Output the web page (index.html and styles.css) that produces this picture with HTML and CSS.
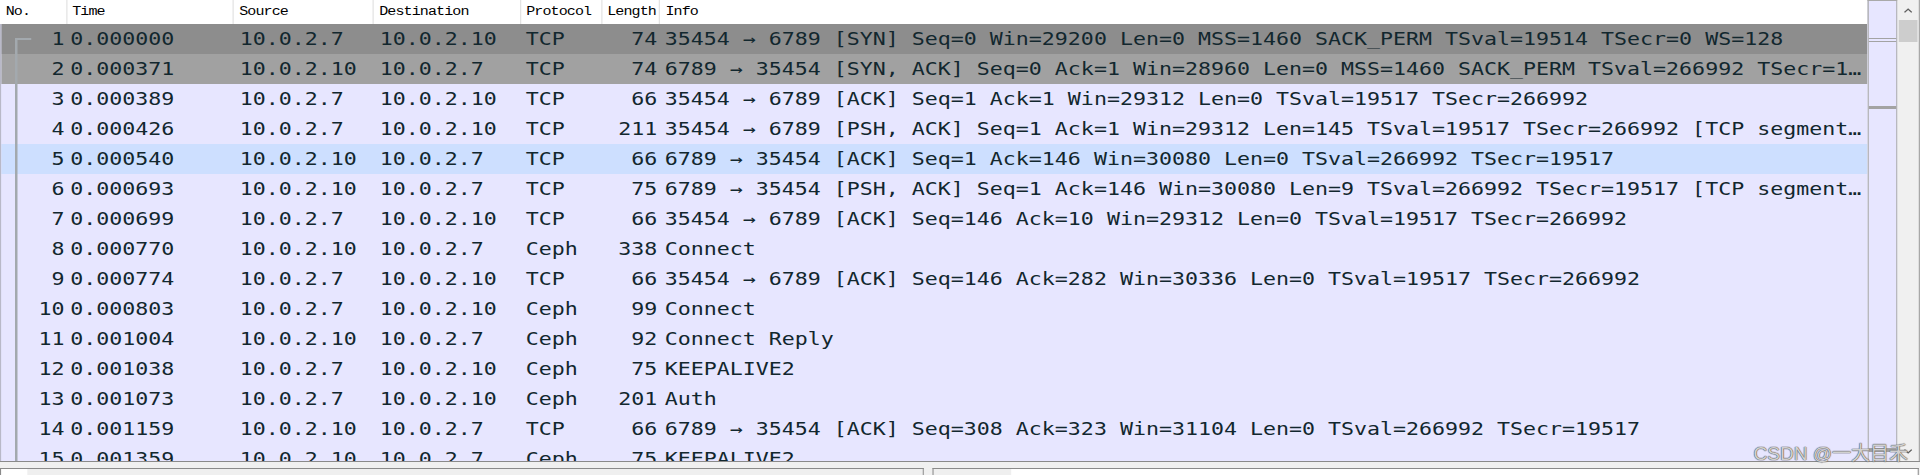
FILE: index.html
```html
<!DOCTYPE html>
<html lang="zh">
<head>
<meta charset="utf-8">
<title>Wireshark packet list</title>
<link rel="stylesheet" href="styles.css">
</head>
<body>
<div class="app">
  <div class="frame">
    <div class="top">
      <div class="plist">
        <div class="phead cols">
          <div class="hc">No.</div>
          <div class="hc">Time</div>
          <div class="hc">Source</div>
          <div class="hc">Destination</div>
          <div class="hc">Protocol</div>
          <div class="hc">Length</div>
          <div class="hc">Info</div>
        </div>
        <div class="pbody">
          <div class="row cols syn-sel"><span class="c num">1</span><span class="c t">0.000000</span><span class="c">10.0.2.7</span><span class="c">10.0.2.10</span><span class="c p">TCP</span><span class="c len">74</span><span class="c info">35454 → 6789 [SYN] Seq=0 Win=29200 Len=0 MSS=1460 SACK_PERM TSval=19514 TSecr=0 WS=128</span></div>
          <div class="row cols syn"><span class="c num">2</span><span class="c t">0.000371</span><span class="c">10.0.2.10</span><span class="c">10.0.2.7</span><span class="c p">TCP</span><span class="c len">74</span><span class="c info">6789 → 35454 [SYN, ACK] Seq=0 Ack=1 Win=28960 Len=0 MSS=1460 SACK_PERM TSval=266992 TSecr=19514 WS=128</span></div>
          <div class="row cols"><span class="c num">3</span><span class="c t">0.000389</span><span class="c">10.0.2.7</span><span class="c">10.0.2.10</span><span class="c p">TCP</span><span class="c len">66</span><span class="c info">35454 → 6789 [ACK] Seq=1 Ack=1 Win=29312 Len=0 TSval=19517 TSecr=266992</span></div>
          <div class="row cols"><span class="c num">4</span><span class="c t">0.000426</span><span class="c">10.0.2.7</span><span class="c">10.0.2.10</span><span class="c p">TCP</span><span class="c len">211</span><span class="c info">35454 → 6789 [PSH, ACK] Seq=1 Ack=1 Win=29312 Len=145 TSval=19517 TSecr=266992 [TCP segment of a reassembled PDU]</span></div>
          <div class="row cols hover"><span class="c num">5</span><span class="c t">0.000540</span><span class="c">10.0.2.10</span><span class="c">10.0.2.7</span><span class="c p">TCP</span><span class="c len">66</span><span class="c info">6789 → 35454 [ACK] Seq=1 Ack=146 Win=30080 Len=0 TSval=266992 TSecr=19517</span></div>
          <div class="row cols"><span class="c num">6</span><span class="c t">0.000693</span><span class="c">10.0.2.10</span><span class="c">10.0.2.7</span><span class="c p">TCP</span><span class="c len">75</span><span class="c info">6789 → 35454 [PSH, ACK] Seq=1 Ack=146 Win=30080 Len=9 TSval=266992 TSecr=19517 [TCP segment of a reassembled PDU]</span></div>
          <div class="row cols"><span class="c num">7</span><span class="c t">0.000699</span><span class="c">10.0.2.7</span><span class="c">10.0.2.10</span><span class="c p">TCP</span><span class="c len">66</span><span class="c info">35454 → 6789 [ACK] Seq=146 Ack=10 Win=29312 Len=0 TSval=19517 TSecr=266992</span></div>
          <div class="row cols"><span class="c num">8</span><span class="c t">0.000770</span><span class="c">10.0.2.10</span><span class="c">10.0.2.7</span><span class="c p">Ceph</span><span class="c len">338</span><span class="c info">Connect</span></div>
          <div class="row cols"><span class="c num">9</span><span class="c t">0.000774</span><span class="c">10.0.2.7</span><span class="c">10.0.2.10</span><span class="c p">TCP</span><span class="c len">66</span><span class="c info">35454 → 6789 [ACK] Seq=146 Ack=282 Win=30336 Len=0 TSval=19517 TSecr=266992</span></div>
          <div class="row cols"><span class="c num">10</span><span class="c t">0.000803</span><span class="c">10.0.2.7</span><span class="c">10.0.2.10</span><span class="c p">Ceph</span><span class="c len">99</span><span class="c info">Connect</span></div>
          <div class="row cols"><span class="c num">11</span><span class="c t">0.001004</span><span class="c">10.0.2.10</span><span class="c">10.0.2.7</span><span class="c p">Ceph</span><span class="c len">92</span><span class="c info">Connect Reply</span></div>
          <div class="row cols"><span class="c num">12</span><span class="c t">0.001038</span><span class="c">10.0.2.7</span><span class="c">10.0.2.10</span><span class="c p">Ceph</span><span class="c len">75</span><span class="c info">KEEPALIVE2</span></div>
          <div class="row cols"><span class="c num">13</span><span class="c t">0.001073</span><span class="c">10.0.2.7</span><span class="c">10.0.2.10</span><span class="c p">Ceph</span><span class="c len">201</span><span class="c info">Auth</span></div>
          <div class="row cols"><span class="c num">14</span><span class="c t">0.001159</span><span class="c">10.0.2.10</span><span class="c">10.0.2.7</span><span class="c p">TCP</span><span class="c len">66</span><span class="c info">6789 → 35454 [ACK] Seq=308 Ack=323 Win=31104 Len=0 TSval=266992 TSecr=19517</span></div>
          <div class="row cols"><span class="c num">15</span><span class="c t">0.001359</span><span class="c">10.0.2.10</span><span class="c">10.0.2.7</span><span class="c p">Ceph</span><span class="c len">75</span><span class="c info">KEEPALIVE2</span></div>
          <div class="tree"><span class="tree-h"></span><span class="tree-v"></span></div>
        </div>
      </div>
      <div class="minimap">
        <div class="mm-seg mm-a"></div>
        <div class="mm-line"></div>
        <div class="mm-seg mm-b"></div>
        <div class="mm-line"></div>
        <div class="mm-seg mm-c"></div>
        <div class="mm-band mm-band1"></div>
        <div class="mm-seg mm-fill"></div>
        <div class="mm-band mm-band2"></div>
        <div class="mm-seg mm-end"></div>
      </div>
      <div class="vscroll">
        <div class="sb-btn"><svg width="7" height="5" viewBox="0 0 7 5"><polyline points="0.6,4.3 3.5,1.2 6.4,4.3" fill="none" stroke="#606060" stroke-width="1.2"/></svg></div>
        <div class="sb-thumb"></div>
        <div class="sb-track"></div>
        <div class="sb-btn"><svg width="7" height="5" viewBox="0 0 7 5"><polyline points="0.6,0.7 3.5,3.8 6.4,0.7" fill="none" stroke="#606060" stroke-width="1.2"/></svg></div>
      </div>
    </div>
    <div class="bottom">
      <div class="pane pane-l"><div class="pane-g"></div><div class="pane-rest"></div></div>
      <div class="pane pane-r"><div class="pane-g"></div><div class="pane-rest"></div></div>
    </div>
  </div>
  <div class="wm">CSDN @一大目禾</div>
</div>
</body>
</html>
```
FILE: styles.css
```css
* { box-sizing: border-box; }

html, body {
  margin: 0;
  padding: 0;
  background: #f0f0f0;
}

.app {
  position: relative;
  width: 1920px;
  height: 475px;
  overflow: hidden;
}

/* the original capture is stretched 1.25x horizontally */
.frame {
  width: 1536px;
  height: 475px;
  transform: scaleX(1.25);
  transform-origin: 0 0;
  display: flex;
  flex-direction: column;
}

.top {
  height: 462px;
  display: flex;
  border-bottom: 1px solid #8a8a8a;
  background: #fff;
}

.plist {
  flex: 1;
  min-width: 0;
  display: flex;
  flex-direction: column;
  overflow: hidden;
}

.cols {
  display: grid;
  grid-template-columns: 53.6px 133.6px 112px 117.6px 64.8px 46.4px minmax(0, 1fr);
}

.phead {
  height: 24px;
  flex: none;
  background: #fff;
  font-family: "Liberation Mono", monospace;
  font-size: 12px;
  letter-spacing: -0.7px;
  color: #000;
}

.hc {
  line-height: 24px;
  padding-left: 4.2px;
  border-right: 1px solid #e3e3e3;
  white-space: nowrap;
  overflow: hidden;
}

.hc:first-child { padding-left: 4.6px; }
.hc:last-child { border-right: none; padding-left: 4.4px; }

.pbody {
  flex: 1;
  position: relative;
  overflow: hidden;
  background: #e7e6ff;
  border-left: 1px solid #b9b9c8;
}

.row {
  height: 30px;
  line-height: 30px;
  font-family: "DejaVu Sans Mono", monospace;
  font-size: 17.3px;
  color: #12272e;
  background: #e7e6ff;
}

.row.syn-sel { background: #8d8d8d; }
.row.syn { background: #a1a1a1; }
.row.hover { background: #cddfff; }

.c {
  padding: 0 3px 0 3.6px;
  white-space: nowrap;
  overflow: hidden;
}

.c.num {
  text-align: right;
  padding: 0 3px 0 0;
}

.c.t { padding-left: 1.6px; }
.c.p { padding-left: 2.8px; }

.c.len {
  text-align: right;
  padding: 0 3.2px 0 0;
}

.c.info {
  padding-left: 2.8px;
  text-overflow: ellipsis;
}

.tree {
  position: absolute;
  left: 0;
  top: 0;
  width: 30px;
  height: 100%;
  pointer-events: none;
}

.tree-h {
  position: absolute;
  left: 11px;
  top: 14px;
  width: 13px;
  height: 2px;
  background: #a3a9ae;
}

.tree-v {
  position: absolute;
  left: 11px;
  top: 14px;
  bottom: 0;
  width: 1.6px;
  background: #a3a9ae;
}

.minimap {
  width: 24px;
  flex: none;
  display: flex;
  flex-direction: column;
  background: #e7e6ff;
  border: 1px solid #a9a9a9;
  border-bottom: none;
}

.mm-a { height: 37px; }
.mm-line { height: 1px; background: #a3a3a3; }
.mm-b { height: 1.7px; }
.mm-c { height: 64px; }
.mm-band { background: #a3a3a3; }
.mm-band1 { height: 3px; }
.mm-fill { flex: 1; }
.mm-band2 { height: 4px; }
.mm-end { height: 9px; }

.vscroll {
  width: 18.4px;
  flex: none;
  display: flex;
  flex-direction: column;
  background: #f0f0f0;
  border-right: 1px solid #a8a8a8;
}

.sb-btn {
  height: 20px;
  flex: none;
  display: flex;
  align-items: center;
  justify-content: center;
}

.sb-thumb {
  height: 22px;
  flex: none;
  margin: 0 1.4px;
  background: #cdcdcd;
}

.sb-track { flex: 1; }

.bottom {
  flex: 1;
  display: flex;
  gap: 6.4px;
  padding-top: 6px;
  background: #f0f0f0;
}

.pane {
  display: flex;
  border: 1px solid #8a8a8a;
  border-bottom: none;
}

.pane-l { width: 739.2px; }
.pane-r { flex: 1; margin-right: 1.4px; }

.pane-l .pane-g { width: 20.8px; background: #fff; }
.pane-l .pane-rest { flex: 1; background: #efefef; }
.pane-r .pane-g { width: 62px; background: #efefef; }
.pane-r .pane-rest { flex: 1; background: #fff; }

.wm {
  position: absolute;
  right: 12px;
  bottom: 11px;
  font-family: "Liberation Sans", "Noto Sans CJK SC", sans-serif;
  font-size: 19px;
  line-height: 20px;
  color: rgba(250, 250, 250, 0.75);
  text-shadow: 0 0 1px #555, 0 0 1px #555, 0 0 1px #777;
  white-space: nowrap;
}
```
